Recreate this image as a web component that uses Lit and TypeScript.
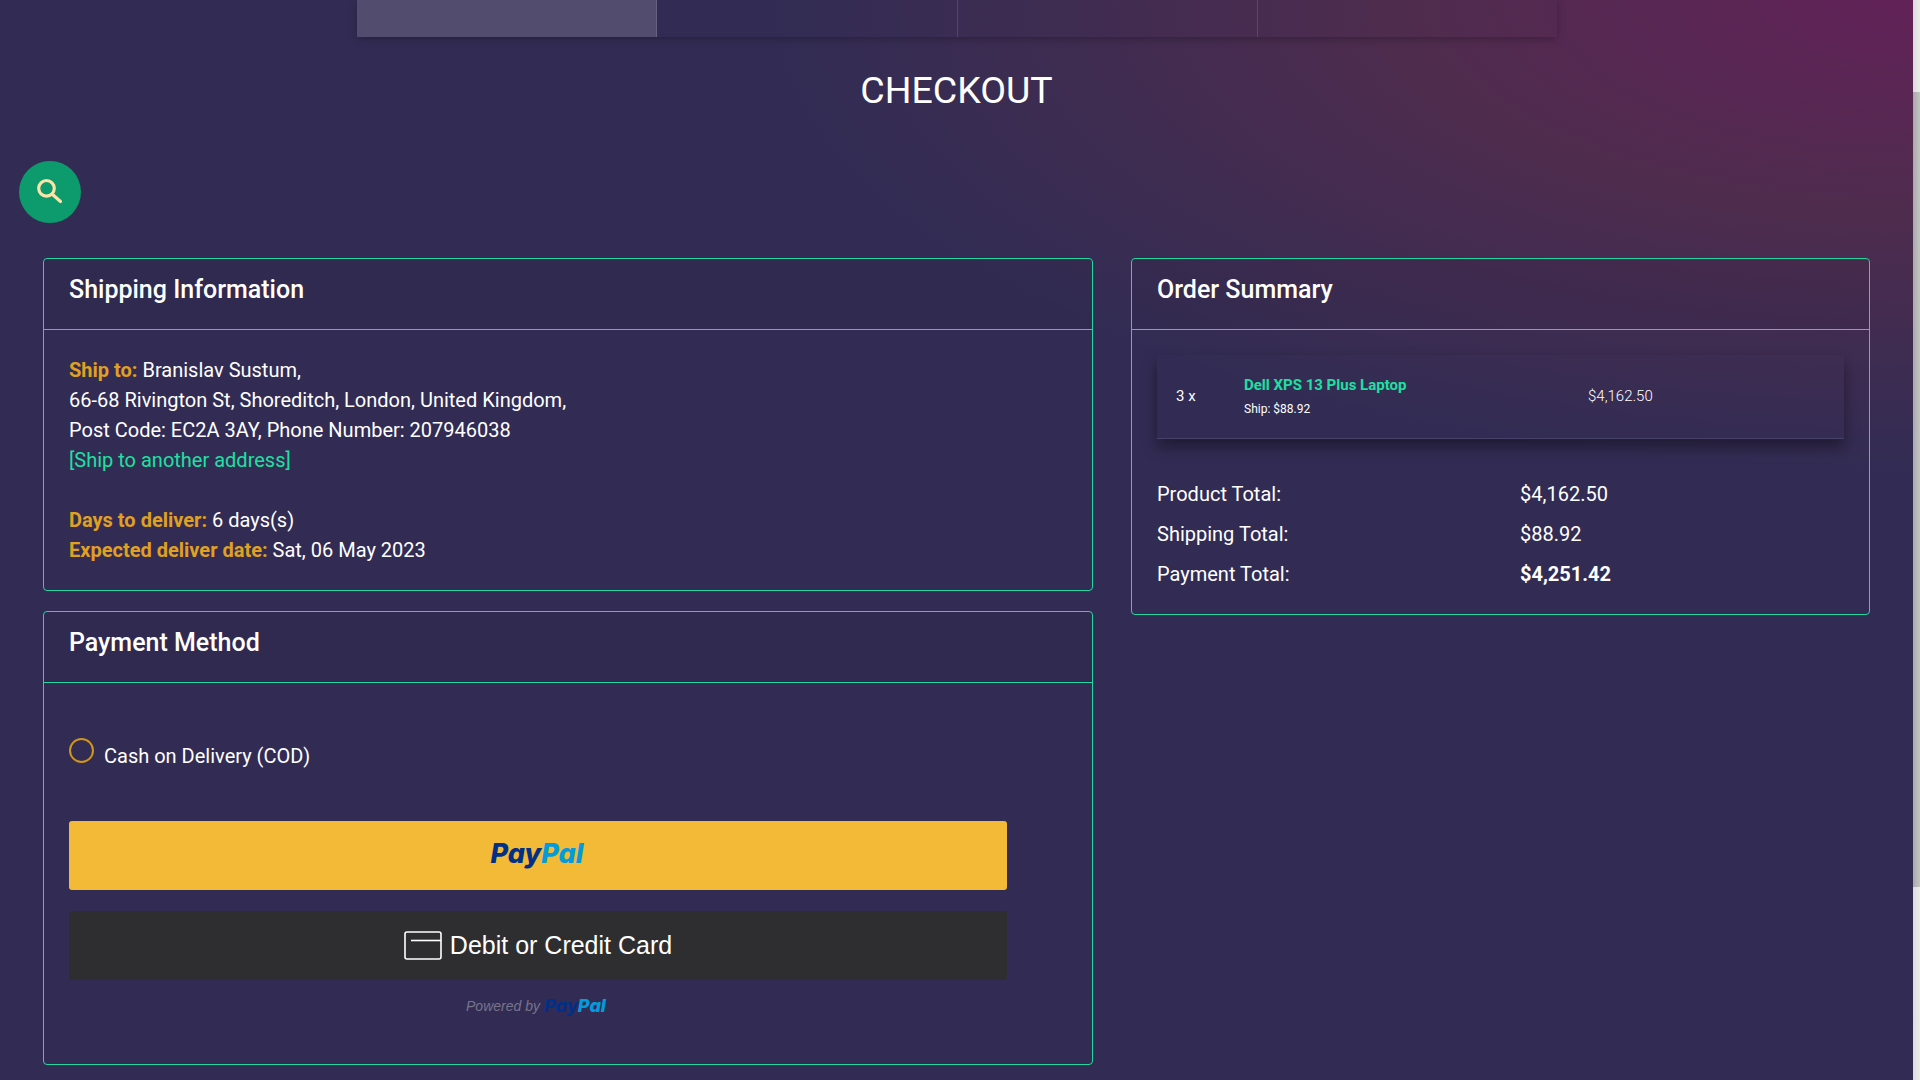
// app.ts
// Checkout page: shipping, payment and order summary

import { LitElement, html, css } from 'lit';
import { customElement } from 'lit/decorators.js';

@customElement('app-root')
export class AppRoot extends LitElement {
  static styles = css`
    :host {
      display: flex;
      height: 100vh;
      overflow: hidden;
      font-family: Roboto, sans-serif;
      font-size: 20px;
      line-height: 30px;
      color: #fff;
      background:
        radial-gradient(ellipse 1150px 470px at 100% 0, rgba(98, 34, 88, 1) 0%, rgba(80, 44, 78, 0.95) 45%, rgba(50, 44, 84, 0) 100%),
        #322c54;
    }

    .page {
      flex: 1;
      min-width: 0;
    }

    .scrollbar {
      width: 7px;
      background: linear-gradient(90deg, #dcdcdc, #ececec);
    }

    .thumb {
      height: 795px;
      margin-top: 92px;
      background: linear-gradient(90deg, #a9a9a9, #c4c4c4);
    }

    /* Top nav, scrolled mostly out of view */
    .tabs {
      display: flex;
      width: 1200px;
      height: 37px;
      margin-left: 357px;
      box-shadow: 0 2px 8px rgba(0, 0, 0, 0.25);
    }

    .tab {
      flex: 1;
      border-right: 1px solid rgba(255, 255, 255, 0.12);
    }

    .tab:last-child {
      border-right: none;
    }

    .tab.active {
      background: rgba(255, 255, 255, 0.16);
    }

    h1 {
      margin: 30px 0 0;
      font-size: 37.5px;
      line-height: 46px;
      font-weight: 400;
      text-align: center;
    }

    .search {
      display: flex;
      align-items: center;
      justify-content: center;
      width: 62px;
      height: 62px;
      margin: 48px 0 35px 19px;
      border-radius: 50%;
      background: #0d9a6c;
    }

    .columns {
      display: grid;
      grid-template-columns: 1050px 739px;
      gap: 38px;
      align-items: start;
      padding-left: 43px;
    }

    .stack {
      display: flex;
      flex-direction: column;
      gap: 20px;
    }

    .card {
      border: 1px solid #22d8a0;
      border-radius: 4px;
    }

    .card-head {
      height: 71px;
      padding: 15px 25px 0;
      box-sizing: border-box;
      border-bottom: 1px solid #22d8a0;
      font-size: 25px;
      font-weight: 500;
      line-height: 32px;
      background: rgba(0, 0, 0, 0.03);
    }

    .card-body {
      padding: 25px;
    }

    .label {
      color: #e0a020;
      font-weight: 700;
    }

    .link {
      color: #1ee0a0;
    }

    .gap {
      height: 30px;
    }

    /* Payment */
    .pay-body {
      padding: 55px 25px 0;
      height: 381px;
      box-sizing: border-box;
    }

    .cod {
      display: flex;
      align-items: flex-start;
      gap: 10px;
    }

    .radio {
      width: 25px;
      height: 25px;
      box-sizing: border-box;
      border: 2px solid #d0951c;
      border-radius: 50%;
    }

    .cod-text {
      margin-top: 3px;
    }

    .pay-btn {
      display: flex;
      align-items: center;
      justify-content: center;
      width: 938px;
      height: 69px;
      border-radius: 3px;
    }

    .paypal-btn {
      margin-top: 50px;
      background: #f2ba36;
    }

    .card-btn {
      margin-top: 21px;
      gap: 8px;
      background: #2e2e30;
      font-family: 'Liberation Sans', Arial, sans-serif;
      font-size: 25px;
    }

    .card-btn span {
      margin-bottom: 2px;
    }

    .logo {
      font-family: Inter, sans-serif;
      font-style: italic;
      font-weight: 800;
    }

    .logo .pay {
      color: #003087;
    }

    .logo .pal {
      color: #009cde;
    }

    .paypal-btn .logo {
      font-size: 27px;
      margin: 0 2px 3px 0;
    }

    .powered {
      display: flex;
      align-items: center;
      justify-content: center;
      gap: 4px;
      width: 934px;
      margin-top: 11px;
      font-family: 'Liberation Sans', Arial, sans-serif;
      font-size: 14px;
      font-style: italic;
      color: #77748c;
    }

    .powered .logo {
      font-size: 18px;
    }

    /* Order summary */
    .summary-body {
      padding: 25px 25px 20px;
    }

    .item {
      display: flex;
      align-items: center;
      height: 84px;
      box-sizing: border-box;
      padding-left: 19px;
      border-bottom: 1px solid #464268;
      font-size: 15px;
      box-shadow: 0 8px 14px rgba(0, 0, 0, 0.4);
    }

    .qty {
      width: 68px;
      margin-bottom: 2px;
    }

    .info {
      width: 344px;
    }

    .price {
      margin-bottom: 2px;
      font-weight: 300;
    }

    .name {
      color: #1ee0a0;
      font-weight: 700;
      line-height: 24px;
    }

    .ship {
      font-size: 12px;
      line-height: 24px;
    }

    .totals {
      display: grid;
      grid-template-columns: 363px 1fr;
      grid-auto-rows: 40px;
      align-items: center;
      margin-top: 35px;
    }

    .totals b {
      font-weight: 700;
    }
  `;

  render() {
    return html`
      <div class="page">
        <div class="tabs">
          <div class="tab active"></div>
          <div class="tab"></div>
          <div class="tab"></div>
          <div class="tab"></div>
        </div>
        <h1>CHECKOUT</h1>
        <div class="search">
          <svg width="32" height="32" viewBox="0 0 32 32" fill="none" stroke="#fde3a7" stroke-width="3.2" stroke-linecap="round">
            <circle cx="12.5" cy="12.3" r="7.8"></circle>
            <path d="M18 18L26.5 25.5"></path>
          </svg>
        </div>
        <div class="columns">
          <div class="stack">
            <section class="card">
              <div class="card-head">Shipping Information</div>
              <div class="card-body">
                <div><span class="label">Ship to:</span> Branislav Sustum,</div>
                <div>66-68 Rivington St, Shoreditch, London, United Kingdom,</div>
                <div>Post Code: EC2A 3AY, Phone Number: 207946038</div>
                <div class="link">[Ship to another address]</div>
                <div class="gap"></div>
                <div><span class="label">Days to deliver:</span> 6 days(s)</div>
                <div><span class="label">Expected deliver date:</span> Sat, 06 May 2023</div>
              </div>
            </section>
            <section class="card">
              <div class="card-head">Payment Method</div>
              <div class="pay-body">
                <div class="cod">
                  <span class="radio"></span>
                  <span class="cod-text">Cash on Delivery (COD)</span>
                </div>
                <div class="pay-btn paypal-btn">
                  <span class="logo"><span class="pay">Pay</span><span class="pal">Pal</span></span>
                </div>
                <div class="pay-btn card-btn">
                  <svg width="38" height="29" viewBox="0 0 38 29" fill="none" stroke="#fff" stroke-width="1.6">
                    <rect x="1" y="1" width="36" height="27" rx="2"></rect>
                    <path d="M7 9.5H37"></path>
                  </svg>
                  <span>Debit or Credit Card</span>
                </div>
                <div class="powered">
                  <span>Powered by</span>
                  <span class="logo"><span class="pay">Pay</span><span class="pal">Pal</span></span>
                </div>
              </div>
            </section>
          </div>
          <section class="card">
            <div class="card-head">Order Summary</div>
            <div class="summary-body">
              <div class="item">
                <div class="qty">3 x</div>
                <div class="info">
                  <div class="name">Dell XPS 13 Plus Laptop</div>
                  <div class="ship">Ship: $88.92</div>
                </div>
                <div class="price">$4,162.50</div>
              </div>
              <div class="totals">
                <span>Product Total:</span><span>$4,162.50</span>
                <span>Shipping Total:</span><span>$88.92</span>
                <span>Payment Total:</span><b>$4,251.42</b>
              </div>
            </div>
          </section>
        </div>
      </div>
      <div class="scrollbar"><div class="thumb"></div></div>
    `;
  }
}
